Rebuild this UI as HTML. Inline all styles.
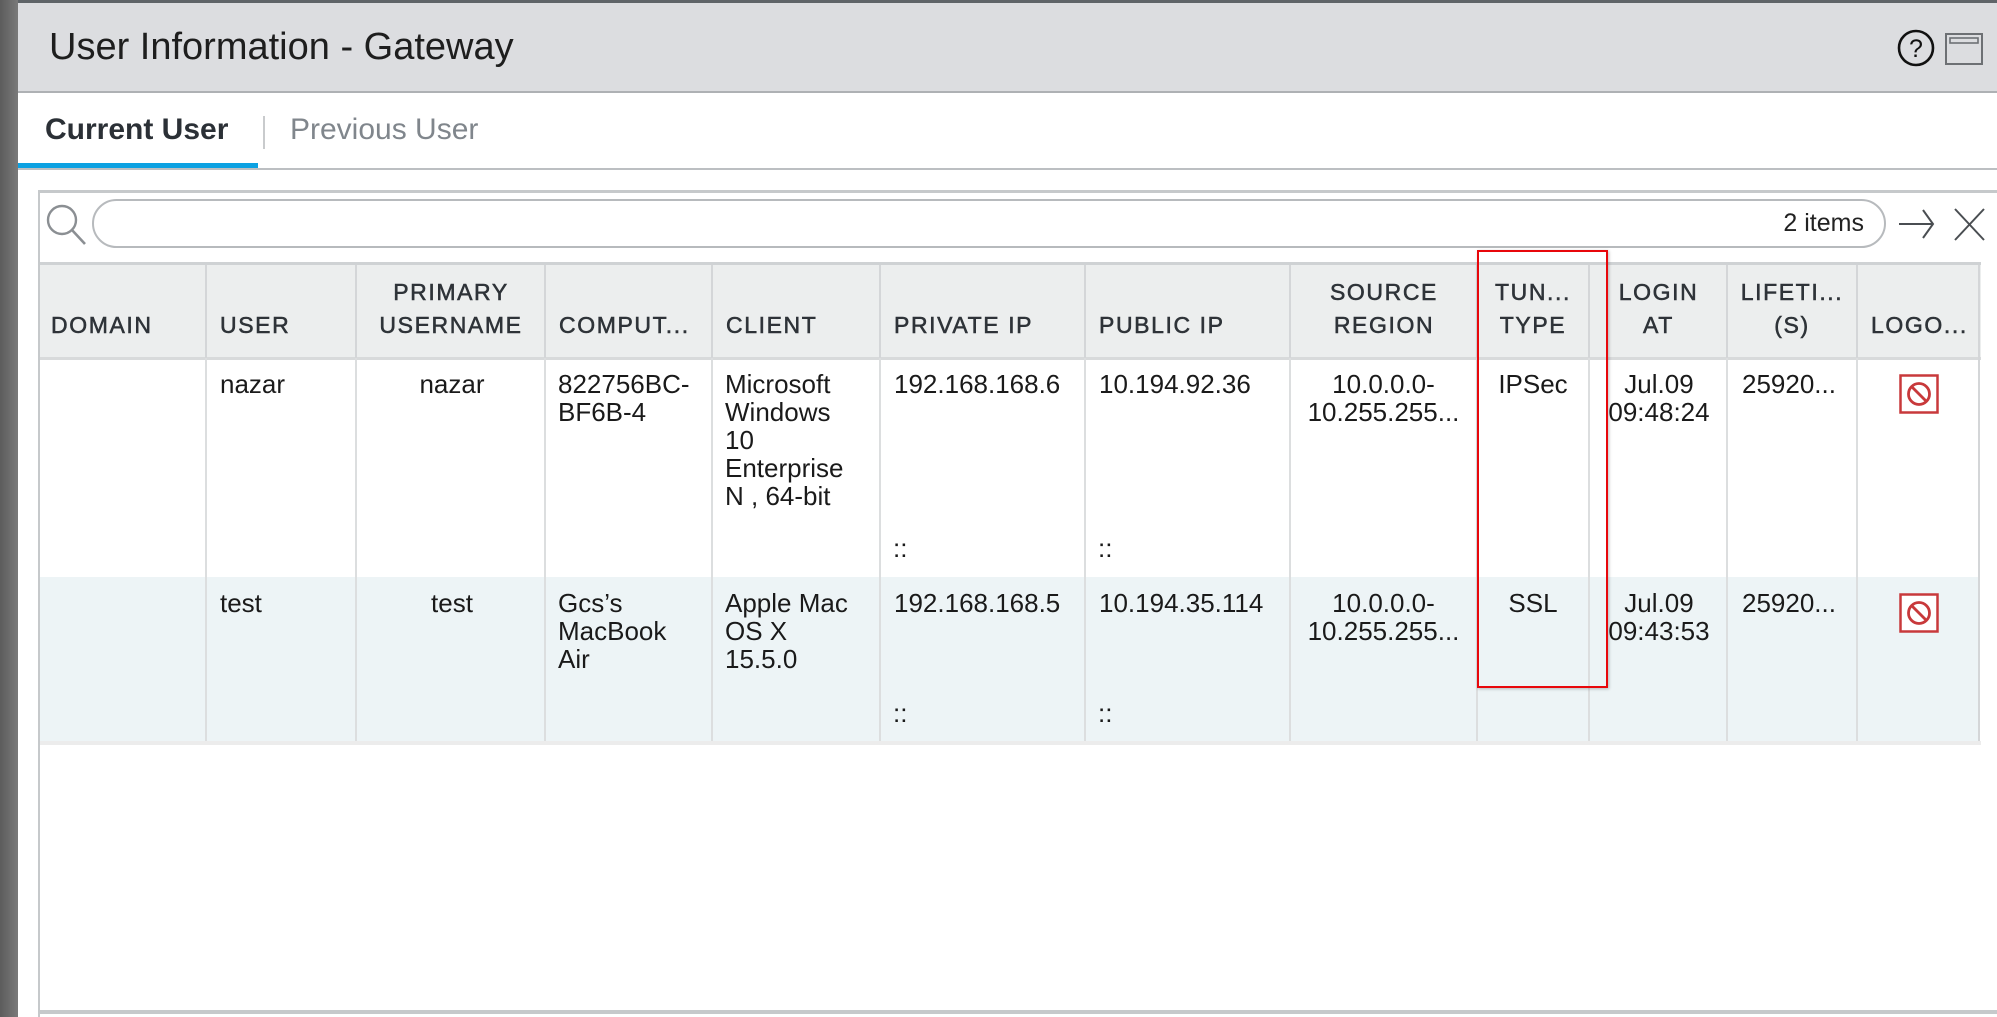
<!DOCTYPE html>
<html><head><meta charset="utf-8"><style>
*{margin:0;padding:0;box-sizing:border-box}
body{width:1997px;height:1017px;overflow:hidden;background:#fff;font-family:"Liberation Sans",sans-serif;color:#1a1a1a;position:relative}
.abs{position:absolute}
.hc{position:absolute;top:265px;height:93px;display:flex;flex-direction:column;justify-content:flex-end;padding:0 12px 16px 13px;font-size:23px;line-height:33px;letter-spacing:1.6px;color:#2e3338;-webkit-text-stroke:0.55px #2e3338;white-space:nowrap;overflow:hidden;border-left:2px solid #d4d6d8}
.c{text-align:center}
.bc{position:absolute;font-size:26px;line-height:28px;padding:12px 10px 0 13px;overflow:hidden;white-space:nowrap;border-left:2px solid #dcdedf}
.r1{top:358px;height:219px}
.r2{top:577px;height:164px;background:#edf4f6}
.dd{position:absolute;font-size:26px;line-height:28px}
</style></head><body>
<div class="abs" style="left:0;top:0;width:18px;height:1017px;background:linear-gradient(90deg,#5c5c5c,#7a7a7a)"></div>
<div class="abs" style="left:18px;top:0;width:1979px;height:3px;background:#5f6468"></div>
<div class="abs" style="left:18px;top:3px;width:1979px;height:90px;background:#dcdde0;border-bottom:2px solid #aeb1b4"></div>
<div class="abs" style="left:49px;top:22px;font-size:38px;line-height:50px;color:#1e1e1e">User Information - Gateway</div>
<svg class="abs" style="left:1896px;top:28px" width="92" height="42" viewBox="0 0 92 42">
<circle cx="20" cy="20" r="17" fill="none" stroke="#111" stroke-width="2.6"/>
<text x="20" y="29" font-family="Liberation Sans" font-size="25" text-anchor="middle" fill="#111">?</text>
<rect x="50" y="6" width="36" height="30" fill="none" stroke="#6d7074" stroke-width="2"/>
<rect x="54" y="10" width="28" height="5" fill="none" stroke="#6d7074" stroke-width="1.6"/>
</svg>
<div class="abs" style="left:45px;top:112px;font-size:30px;line-height:36px;font-weight:bold;color:#2b3036">Current User</div>
<div class="abs" style="left:263px;top:116px;width:2px;height:33px;background:#c9cbcd"></div>
<div class="abs" style="left:290px;top:112px;font-size:30px;line-height:36px;color:#80868c">Previous User</div>
<div class="abs" style="left:18px;top:163px;width:240px;height:5px;background:#0ba1e2"></div>
<div class="abs" style="left:18px;top:168px;width:1979px;height:2px;background:#bcbfc2"></div>
<div class="abs" style="left:38px;top:190px;width:1959px;height:3px;background:#c6c9cb"></div>
<div class="abs" style="left:38px;top:190px;width:2px;height:827px;background:#c6c9cb"></div>
<div class="abs" style="left:38px;top:1010px;width:1959px;height:4px;background:#c6c9cb"></div>
<svg class="abs" style="left:44px;top:202px" width="46" height="46" viewBox="0 0 46 46">
<circle cx="18" cy="18" r="14" fill="none" stroke="#8b8f93" stroke-width="2.4"/>
<line x1="28" y1="28" x2="41" y2="42" stroke="#8b8f93" stroke-width="2.6"/>
</svg>
<div class="abs" style="left:92px;top:199px;width:1794px;height:49px;border:2px solid #b7babd;border-radius:25px"></div>
<div class="abs" style="left:1760px;top:206px;width:104px;text-align:right;font-size:25px;line-height:34px;color:#222">2 items</div>
<svg class="abs" style="left:1895px;top:205px" width="95" height="38" viewBox="0 0 95 38">
<line x1="4" y1="19" x2="38" y2="19" stroke="#4a4e52" stroke-width="2"/>
<polyline points="28,5 38,19 28,33" fill="none" stroke="#4a4e52" stroke-width="2"/>
<line x1="60" y1="4" x2="89" y2="35" stroke="#4a4e52" stroke-width="2"/>
<line x1="89" y1="4" x2="60" y2="35" stroke="#4a4e52" stroke-width="2"/>
</svg>
<div class="abs" style="left:40px;top:262px;width:1941px;height:3px;background:#cfd2d4"></div>
<div class="abs" style="left:40px;top:265px;width:1941px;height:93px;background:#eceeee"></div>
<div class="abs" style="left:40px;top:357px;width:1941px;height:3px;background:#d8dadb"></div>
<div class="hc" style="left:38px;width:167px;border-left:none">DOMAIN</div>
<div class="hc" style="left:205px;width:150px">USER</div>
<div class="hc c" style="left:355px;width:189px">PRIMARY<br>USERNAME</div>
<div class="hc" style="left:544px;width:167px">COMPUT...</div>
<div class="hc" style="left:711px;width:168px">CLIENT</div>
<div class="hc" style="left:879px;width:205px">PRIVATE IP</div>
<div class="hc" style="left:1084px;width:205px">PUBLIC IP</div>
<div class="hc c" style="left:1289px;width:187px">SOURCE<br>REGION</div>
<div class="hc c" style="left:1476px;width:112px;padding-left:6px;padding-right:6px">TUN...<br>TYPE</div>
<div class="hc c" style="left:1588px;width:138px">LOGIN<br>AT</div>
<div class="hc c" style="left:1726px;width:130px;padding-left:6px;padding-right:6px">LIFETI...<br>(S)</div>
<div class="hc" style="left:1856px;width:125px">LOGO...</div>
<div class="abs" style="left:1978px;top:265px;width:2px;height:476px;background:#d4d6d8"></div>
<div class="bc r1" style="left:40px;width:165px;border-left:none"></div>
<div class="bc r1" style="left:205px;width:150px">nazar</div>
<div class="bc r1 c" style="left:355px;width:189px">nazar</div>
<div class="bc r1" style="left:544px;width:167px;padding-left:12px">822756BC-<br>BF6B-4</div>
<div class="bc r1" style="left:711px;width:168px;padding-left:12px">Microsoft<br>Windows<br>10<br>Enterprise<br>N , 64-bit</div>
<div class="bc r1" style="left:879px;width:205px">192.168.168.6</div>
<div class="bc r1" style="left:1084px;width:205px">10.194.92.36</div>
<div class="bc r1 c" style="left:1289px;width:187px;padding:12px 6px 0 6px">10.0.0.0-<br>10.255.255...</div>
<div class="bc r1 c" style="left:1476px;width:112px;padding:12px 4px 0 4px">IPSec</div>
<div class="bc r1" style="left:1588px;width:138px;padding:12px 0 0 0"><div style="margin-left:-6px;width:150px;text-align:center">Jul.09<br>09:48:24</div></div>
<div class="bc r1" style="left:1726px;width:130px;padding-left:14px">25920...</div>
<div class="bc r1" style="left:1856px;width:122px"></div>
<div class="bc r2" style="left:40px;width:165px;border-left:none"></div>
<div class="bc r2" style="left:205px;width:150px">test</div>
<div class="bc r2 c" style="left:355px;width:189px">test</div>
<div class="bc r2" style="left:544px;width:167px;padding-left:12px">Gcs’s<br>MacBook<br>Air</div>
<div class="bc r2" style="left:711px;width:168px;padding-left:12px">Apple Mac<br>OS X<br>15.5.0</div>
<div class="bc r2" style="left:879px;width:205px">192.168.168.5</div>
<div class="bc r2" style="left:1084px;width:205px">10.194.35.114</div>
<div class="bc r2 c" style="left:1289px;width:187px;padding:12px 6px 0 6px">10.0.0.0-<br>10.255.255...</div>
<div class="bc r2 c" style="left:1476px;width:112px;padding:12px 4px 0 4px">SSL</div>
<div class="bc r2" style="left:1588px;width:138px;padding:12px 0 0 0"><div style="margin-left:-6px;width:150px;text-align:center">Jul.09<br>09:43:53</div></div>
<div class="bc r2" style="left:1726px;width:130px;padding-left:14px">25920...</div>
<div class="bc r2" style="left:1856px;width:122px"></div>
<div class="abs" style="left:40px;top:741px;width:1941px;height:4px;background:#ececec"></div>
<div class="dd" style="left:893px;top:534px">::</div>
<div class="dd" style="left:1098px;top:534px">::</div>
<div class="dd" style="left:893px;top:699px">::</div>
<div class="dd" style="left:1098px;top:699px">::</div>
<svg class="abs" style="left:1899px;top:374px" width="40" height="40" viewBox="0 0 40 40">
<rect x="1.5" y="1.5" width="37" height="37" fill="#fff" stroke="#c8393b" stroke-width="2.5"/>
<circle cx="20" cy="20" r="10.5" fill="none" stroke="#c8393b" stroke-width="2.8"/>
<line x1="12.5" y1="12.5" x2="27.5" y2="27.5" stroke="#c8393b" stroke-width="2.8"/>
</svg>
<svg class="abs" style="left:1899px;top:593px" width="40" height="40" viewBox="0 0 40 40">
<rect x="1.5" y="1.5" width="37" height="37" fill="#fff" stroke="#c8393b" stroke-width="2.5"/>
<circle cx="20" cy="20" r="10.5" fill="none" stroke="#c8393b" stroke-width="2.8"/>
<line x1="12.5" y1="12.5" x2="27.5" y2="27.5" stroke="#c8393b" stroke-width="2.8"/>
</svg>
<div class="abs" style="left:1477px;top:250px;width:131px;height:438px;border:2px solid #e8070b;box-shadow:1px 1px 3px rgba(0,0,0,0.25)"></div>
</body></html>
